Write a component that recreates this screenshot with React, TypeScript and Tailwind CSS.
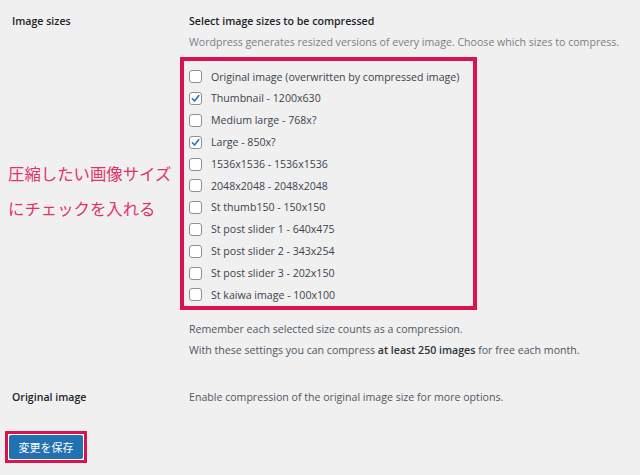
const sizes = [
  { label: 'Original image (overwritten by compressed image)', checked: false },
  { label: 'Thumbnail - 1200x630', checked: true },
  { label: 'Medium large - 768x?', checked: false },
  { label: 'Large - 850x?', checked: true },
  { label: '1536x1536 - 1536x1536', checked: false },
  { label: '2048x2048 - 2048x2048', checked: false },
  { label: 'St thumb150 - 150x150', checked: false },
  { label: 'St post slider 1 - 640x475', checked: false },
  { label: 'St post slider 2 - 343x254', checked: false },
  { label: 'St post slider 3 - 202x150', checked: false },
  { label: 'St kaiwa image - 100x100', checked: false },
];

function Checkbox({ checked }: { checked: boolean }) {
  return (
    <span className="w-[13px] h-[13px] rounded-[3px] border border-[#8c8f94] bg-white flex items-center justify-center shrink-0">
      {checked && (
        <svg width="11" height="11" viewBox="0 0 12 12">
          <path d="M2.5 6.3 L5 8.8 L9.6 2.8" fill="none" stroke="#2271b1" strokeWidth="1.7" strokeLinecap="round" strokeLinejoin="round" />
        </svg>
      )}
    </span>
  );
}

export default function App() {
  return (
    <div
      className="w-[640px] h-[475px] bg-[#f0f0f1] text-[#1d2327] text-[10.6px] overflow-hidden relative"
      style={{ fontFamily: '"Open Sans", "Noto Sans", sans-serif' }}
    >
      {/* Image sizes row */}
      <div className="flex pt-[12px]">
        <div className="w-[189px] pl-[12px] font-semibold leading-[18px]">Image sizes</div>
        <div className="flex-1">
          <div className="font-semibold leading-[18px]">Select image sizes to be compressed</div>
          <div className="text-[#7a7f84] leading-[18px] mt-[3px]">
            Wordpress generates resized versions of every image. Choose which sizes to compress.
          </div>
          <div className="w-[297px] h-[253px] -ml-[9px] mt-[6px] border-[4px] border-[#d9134f] pl-[5px] pt-[5px] flex flex-col">
            {sizes.map((s) => (
              <div key={s.label} className="flex items-center gap-[9px] h-[21.8px] text-[#3c434a]">
                <Checkbox checked={s.checked} />
                <span className="leading-none">{s.label}</span>
              </div>
            ))}
          </div>
          <div className="text-[#50575e] leading-[21px] mt-[9px]">
            <div>Remember each selected size counts as a compression.</div>
            <div>
              With these settings you can compress <span className="font-semibold text-[#2c3338]">at least 250 images</span> for free each month.
            </div>
          </div>
        </div>
      </div>

      {/* Annotation */}
      <div
        className="absolute left-[8px] top-[156px] text-[#e2326b] text-[16.4px] leading-[35px]"
        style={{ fontFamily: '"Noto Sans CJK JP", sans-serif' }}
      >
        <div>圧縮したい画像サイズ</div>
        <div>にチェックを入れる</div>
      </div>

      {/* Original image row */}
      <div className="flex mt-[29px]">
        <div className="w-[189px] pl-[12px] font-semibold">Original image</div>
        <div className="text-[#50575e]">Enable compression of the original image size for more options.</div>
      </div>

      {/* Save button */}
      <div className="ml-[5px] mt-[25px] w-[82px] h-[32px] border-[3px] border-[#d9134f] p-[1px] bg-white">
        <button
          className="w-full h-full bg-[#2271b1] text-white text-[11px] rounded-[2px]"
          style={{ fontFamily: '"Noto Sans CJK JP", sans-serif' }}
        >
          変更を保存
        </button>
      </div>
    </div>
  );
}
